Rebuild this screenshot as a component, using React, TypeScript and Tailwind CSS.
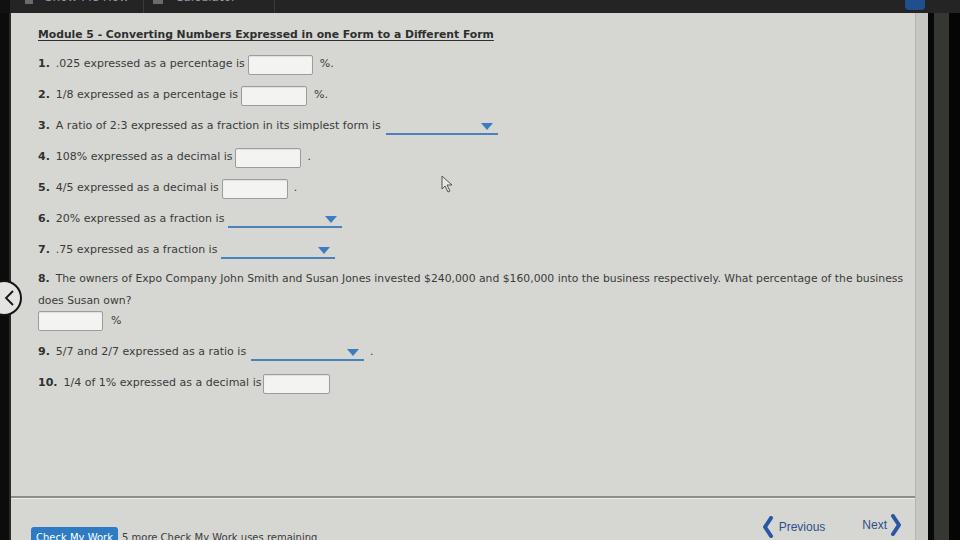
import React from "react";

const font = { fontFamily: '"DejaVu Sans", Verdana, sans-serif' };

function Box({ w = 65 }: { w?: number }) {
  return (
    <span
      className="inline-block h-[20px] bg-[#f3f3f1] border border-[#9c9d9a] rounded-[2px] shadow-[inset_0_1px_1px_rgba(0,0,0,0.08)] align-middle"
      style={{ width: w }}
    />
  );
}

function Dropdown({ w = 113 }: { w?: number }) {
  return (
    <span
      className="inline-flex h-[16px] items-start justify-end border-b-2 border-[#4a82bd]"
      style={{ width: w }}
    >
      <svg width="12" height="7" viewBox="0 0 12 7" className="mt-[4px] mr-[5px]">
        <path d="M0 0 H12 L6 7 Z" fill="#3d7cc4" />
      </svg>
    </span>
  );
}

function Row({ n, children }: { n: string; children: React.ReactNode }) {
  return (
    <div className="h-[31px] flex items-center text-[11px] text-[#3a3b3a]">
      <span className="font-bold text-[#2f302f] mr-[6px]">{n}</span>
      {children}
    </div>
  );
}

export default function App() {
  return (
    <div className="w-[960px] h-[540px] bg-black flex flex-col overflow-hidden relative" style={font}>
      {/* top toolbar, mostly cut off */}
      <div className="h-[13px] bg-[#242424] flex items-end overflow-hidden shrink-0">
        <div className="w-[10px] h-full bg-[#111]" />
        <div className="flex items-end h-full pl-[15px] w-[134px] border-r border-[#3a3a3a]">
          <span className="w-[8px] h-[4px] bg-[#6b6b6b] mr-[12px] mb-[9px]" />
          <span className="text-[12px] text-[#9b9b9b] leading-[12px] mb-[10px] whitespace-nowrap">Show Me How</span>
        </div>
        <div className="flex items-end h-full pl-[9px] w-[131px] border-r border-[#3a3a3a]">
          <span className="w-[10px] h-[4px] bg-[#6b6b6b] mr-[12px] mb-[9px]" />
          <span className="text-[12px] text-[#9b9b9b] leading-[12px] mb-[10px] whitespace-nowrap">Calculator</span>
        </div>
        <div className="flex-1" />
        <div className="w-[20px] h-[10px] mb-[3px] rounded-b-[4px] bg-[#1f4f8c] mr-[35px]" />
      </div>

      <div className="flex flex-1 min-h-0">
        <div className="w-[9px] bg-[#0c0c0c]" />
        <div className="w-[2px] bg-[#2a2a2a]" />

        {/* page */}
        <div className="w-[904px] bg-[#d6d7d3] flex flex-col">
          <div className="flex-1 pl-[27px] pt-[12px]">
            <div className="h-[20px] flex items-center">
              <span className="text-[10.8px] font-bold text-[#2e2f2e] underline underline-offset-[2px]">
                Module 5 - Converting Numbers Expressed in one Form to a Different Form
              </span>
            </div>
            <div className="mt-[4px]">
              <Row n="1.">
                <span>.025 expressed as a percentage is</span>
                <span className="ml-[3px] flex"><Box w={65} /></span>
                <span className="ml-[7px]">%.</span>
              </Row>
              <Row n="2.">
                <span>1/8 expressed as a percentage is</span>
                <span className="ml-[3px] flex"><Box w={66} /></span>
                <span className="ml-[7px]">%.</span>
              </Row>
              <Row n="3.">
                <span>A ratio of 2:3 expressed as a fraction in its simplest form is</span>
                <span className="ml-[5px] flex"><Dropdown w={112} /></span>
              </Row>
              <Row n="4.">
                <span>108% expressed as a decimal is</span>
                <span className="ml-[3px] flex"><Box w={66} /></span>
                <span className="ml-[6px]">.</span>
              </Row>
              <Row n="5.">
                <span>4/5 expressed as a decimal is</span>
                <span className="ml-[3px] flex"><Box w={66} /></span>
                <span className="ml-[6px]">.</span>
              </Row>
              <Row n="6.">
                <span>20% expressed as a fraction is</span>
                <span className="ml-[4px] flex"><Dropdown w={114} /></span>
              </Row>
              <Row n="7.">
                <span>.75 expressed as a fraction is</span>
                <span className="ml-[4px] flex"><Dropdown w={114} /></span>
              </Row>
              <div className="pt-[2px] text-[10.8px] text-[#3a3b3a] leading-[22px]">
                <div className="whitespace-nowrap">
                  <span className="font-bold text-[#2f302f] mr-[6px]">8.</span>
                  The owners of Expo Company John Smith and Susan Jones invested $240,000 and $160,000 into the business respectively. What percentage of the business
                </div>
                <div>does Susan own?</div>
              </div>
              <div className="-mt-px h-[20px] flex items-center text-[11px] text-[#3a3b3a]">
                <Box w={65} />
                <span className="ml-[8px]">%</span>
              </div>
              <div className="mt-[6px]">
                <Row n="9.">
                  <span>5/7 and 2/7 expressed as a ratio is</span>
                  <span className="ml-[5px] flex"><Dropdown w={113} /></span>
                  <span className="ml-[6px]">.</span>
                </Row>
                <Row n="10.">
                  <span>1/4 of 1% expressed as a decimal is</span>
                  <span className="ml-[2px] flex"><Box w={67} /></span>
                </Row>
              </div>
            </div>
          </div>

          {/* divider */}
          <div className="h-[2px] bg-[#8d8e8a] shadow-[0_1px_0_#eeeeea]" />

          {/* footer */}
          <div className="h-[42px] flex items-end justify-between pl-[20px] pr-[13px]">
            <div className="flex items-start h-[13px] overflow-hidden">
              <span className="h-[20px] px-[5px] pt-[3px] rounded-[3px] bg-[#2c7bc3] text-white text-[10px] whitespace-nowrap">
                Check My Work
              </span>
              <span className="ml-[4px] pt-[3px] text-[10px] text-[#3a3b3a] whitespace-nowrap">
                5 more Check My Work uses remaining
              </span>
            </div>
            <div className="flex items-end pb-[2px] text-[12px] text-[#2d4f8c]" style={{ fontFamily: '"Liberation Sans", Arial, sans-serif' }}>
              <svg width="12" height="22" viewBox="0 0 12 22" className="mr-[5px]">
                <path d="M9 2 L3 11 L9 20" stroke="#2a57a3" strokeWidth="4" fill="none" strokeLinecap="round" strokeLinejoin="round" />
              </svg>
              <span className="mb-[2px]">Previous</span>
              <span className="ml-[37px] mb-[4px]">Next</span>
              <svg width="12" height="22" viewBox="0 0 12 22" className="ml-[3px] mb-[2px]">
                <path d="M3 2 L9 11 L3 20" stroke="#2a57a3" strokeWidth="4" fill="none" strokeLinecap="round" strokeLinejoin="round" />
              </svg>
            </div>
          </div>
        </div>

        {/* scrollbar strip and screen edge */}
        <div className="w-[13px] bg-[#c6c7c3] border-l border-[#b3b4b0]" />
        <div className="w-[6px] bg-[#070707]" />
        <div className="w-[15px] bg-[#353733]" />
        <div className="flex-1 bg-[#050505]" />
      </div>

      {/* left nav circle */}
      <div className="absolute left-[-14px] top-[280px] w-[36px] h-[36px] rounded-full bg-[#e4e4e2] border-2 border-[#151515] flex items-center justify-end pr-[6px]">
        <svg width="10" height="16" viewBox="0 0 10 16">
          <path d="M9 1 L2 8 L9 15" stroke="#151515" strokeWidth="1.8" fill="none" />
        </svg>
      </div>

      {/* mouse cursor */}
      <svg className="absolute left-[441px] top-[175px]" width="13" height="18" viewBox="0 0 13 18">
        <path d="M1 1 L1 14 L4 11 L7 17 L9 16 L6 10 L11 10 Z" fill="#e6e6e4" stroke="#555" strokeWidth="1" />
      </svg>
    </div>
  );
}
